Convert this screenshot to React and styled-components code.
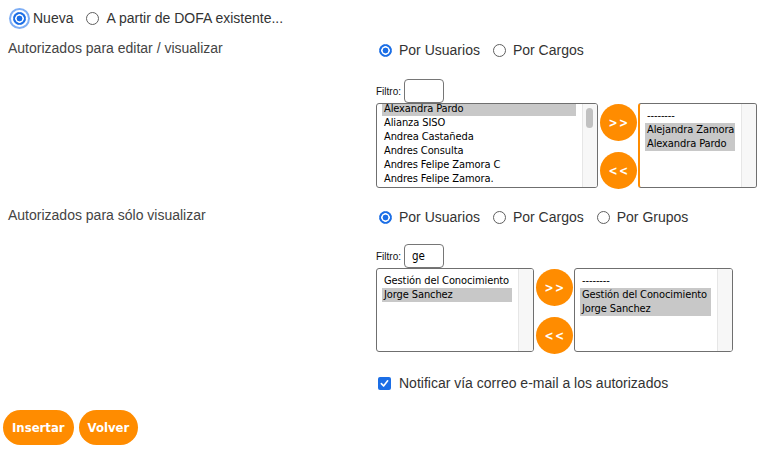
import styled, { createGlobalStyle } from 'styled-components';

const GlobalStyle = createGlobalStyle`
  body {
    margin: 0;
    background: #fff;
    font-family: 'Liberation Sans', Arial, sans-serif;
  }
`;

const ORANGE = '#ff8c00';
const LIST_FONT = "'DejaVu Sans Condensed', Tahoma, 'Liberation Sans', sans-serif";

const editUsers = ['Alexandra Pardo', 'Alianza SISO', 'Andrea Castañeda', 'Andres Consulta', 'Andres Felipe Zamora C', 'Andres Felipe Zamora.'];
const viewUsers = ['Gestión del Conocimiento', 'Jorge Sanchez'];

const Radio = ({ label, checked, focused }) => (
  <RadioLabel>
    <RadioDot $checked={checked} $focused={focused} />
    {label}
  </RadioLabel>
);

const ListBox = ({ items, selected = [], width, height, scroll = 0, accent, thumb }) => (
  <Box $width={width} $height={height} $accent={accent}>
    <Options $scroll={scroll}>
      {items.map((it) => (
        <Option key={it} $selected={selected.includes(it)}>
          {it}
        </Option>
      ))}
    </Options>
    <Track>{thumb && <Thumb />}</Track>
  </Box>
);

const Mover = () => (
  <MoverColumn>
    <MoveButton>&gt;&gt;</MoveButton>
    <MoveButton>&lt;&lt;</MoveButton>
  </MoverColumn>
);

const App = () => {
  return (
    <Page>
      <GlobalStyle />
      <TopRow>
        <Radio label="Nueva" checked focused />
        <Radio label="A partir de DOFA existente..." />
      </TopRow>

      <Section>
        <SectionLabel>Autorizados para editar / visualizar</SectionLabel>
        <RightColumn>
          <RadioRow>
            <Radio label="Por Usuarios" checked />
            <Radio label="Por Cargos" />
          </RadioRow>
          <FilterRow>
            <FilterLabel>Filtro:</FilterLabel>
            <FilterInput defaultValue="" />
          </FilterRow>
          <PickerRow>
            <ListBox items={editUsers} selected={['Alexandra Pardo']} width={222} height={85} scroll={-7} thumb />
            <Mover />
            <ListBox
              items={['--------', 'Alejandra Zamora', 'Alexandra Pardo']}
              selected={['Alejandra Zamora', 'Alexandra Pardo']}
              width={119}
              height={85}
              accent
            />
          </PickerRow>
        </RightColumn>
      </Section>

      <Section $gap={18}>
        <SectionLabel>Autorizados para sólo visualizar</SectionLabel>
        <RightColumn>
          <RadioRow>
            <Radio label="Por Usuarios" checked />
            <Radio label="Por Cargos" />
            <Radio label="Por Grupos" />
          </RadioRow>
          <FilterRow $gap={17}>
            <FilterLabel>Filtro:</FilterLabel>
            <FilterInput defaultValue="ge" />
          </FilterRow>
          <PickerRow>
            <ListBox items={viewUsers} selected={['Jorge Sanchez']} width={158} height={84} />
            <Mover />
            <ListBox
              items={['--------', 'Gestión del Conocimiento', 'Jorge Sanchez']}
              selected={['Gestión del Conocimiento', 'Jorge Sanchez']}
              width={159}
              height={84}
            />
          </PickerRow>
          <CheckRow>
            <CheckBox>
              <svg width="9" height="9" viewBox="0 0 10 10">
                <path d="M1.5 5.2 L4 7.8 L8.5 2" fill="none" stroke="#fff" strokeWidth="1.8" strokeLinecap="round" strokeLinejoin="round" />
              </svg>
            </CheckBox>
            Notificar vía correo e-mail a los autorizados
          </CheckRow>
        </RightColumn>
      </Section>

      <ActionRow>
        <ActionButton>Insertar</ActionButton>
        <ActionButton>Volver</ActionButton>
      </ActionRow>
    </Page>
  );
};

const Page = styled.div`
  padding: 8px 0 0 8px;
  width: 766px;
  box-sizing: border-box;
`;

const TopRow = styled.div`
  display: flex;
  align-items: center;
  gap: 13px;
  height: 20px;
  padding-left: 5px;
`;

const RadioLabel = styled.label`
  display: inline-flex;
  align-items: center;
  gap: 7px;
  font-size: 14px;
  color: #333;
  white-space: nowrap;
`;

const RadioDot = styled.span`
  width: 13px;
  height: 13px;
  border-radius: 50%;
  box-sizing: border-box;
  flex-shrink: 0;
  border: 1px solid ${(p) => (p.$checked ? '#1b6ee6' : '#5f5f5f')};
  background: ${(p) =>
    p.$checked ? 'radial-gradient(circle, #1b6ee6 0 2.6px, #fff 3.2px 4px, #1b6ee6 4.6px)' : '#fff'};
  box-shadow: ${(p) => (p.$focused ? '0 0 0 2px #fff, 0 0 0 4px #7eaef5' : 'none')};
`;

const Section = styled.div`
  display: grid;
  grid-template-columns: 368px 1fr;
  margin-top: ${(p) => p.$gap || 12}px;
`;

const SectionLabel = styled.div`
  font-size: 14px;
  line-height: 16px;
  color: #444;
`;

const RightColumn = styled.div`
  display: flex;
  flex-direction: column;
`;

const RadioRow = styled.div`
  display: flex;
  align-items: center;
  gap: 13px;
  height: 20px;
  padding-left: 3px;
`;

const FilterRow = styled.div`
  display: flex;
  align-items: center;
  gap: 3px;
  margin-top: ${(p) => p.$gap || 19}px;
`;

const FilterLabel = styled.span`
  font-size: 10px;
  color: #111;
`;

const FilterInput = styled.input`
  width: 40px;
  height: 24px;
  box-sizing: border-box;
  border: 1px solid #767676;
  border-radius: 4px;
  padding: 0 7px;
  font-family: ${LIST_FONT};
  font-size: 11.5px;
  color: #000;
  outline: none;
`;

const PickerRow = styled.div`
  display: flex;
  align-items: flex-start;
`;

const Box = styled.div`
  display: flex;
  width: ${(p) => p.$width}px;
  height: ${(p) => p.$height}px;
  box-sizing: border-box;
  border: 1px solid #6f6f6f;
  border-left: ${(p) => (p.$accent ? `2px solid ${ORANGE}` : '1px solid #6f6f6f')};
  border-radius: 3px;
  overflow: hidden;
  background: #fff;
`;

const Options = styled.div`
  flex: 1;
  min-width: 0;
  padding: 5px 6px 0 5px;
  margin-top: ${(p) => p.$scroll}px;
`;

const Option = styled.div`
  font-family: ${LIST_FONT};
  font-size: 11px;
  letter-spacing: -0.1px;
  line-height: 14px;
  color: #000;
  white-space: nowrap;
  overflow: hidden;
  padding-left: 2px;
  background: ${(p) => (p.$selected ? '#c8c8c8' : 'transparent')};
`;

const Track = styled.div`
  position: relative;
  width: 14px;
  flex-shrink: 0;
  background: #f7f7f7;
  border-left: 1px solid #e6e6e6;
`;

const Thumb = styled.div`
  position: absolute;
  top: 4px;
  left: 3px;
  width: 7px;
  height: 20px;
  border-radius: 4px;
  background: #c1c1c1;
`;

const MoverColumn = styled.div`
  display: flex;
  flex-direction: column;
  gap: 11px;
  padding: 1px 1px 0 2px;
`;

const MoveButton = styled.button`
  width: 37px;
  height: 37px;
  border: none;
  border-radius: 50%;
  background: ${ORANGE};
  color: #fff;
  font-family: ${LIST_FONT};
  font-weight: bold;
  font-size: 12px;
  letter-spacing: 1.5px;
  padding: 0 0 0 1px;
  cursor: pointer;
`;

const CheckRow = styled.label`
  display: flex;
  align-items: center;
  gap: 8px;
  height: 20px;
  margin-top: 19px;
  padding-left: 2px;
  font-size: 14px;
  color: #333;
`;

const CheckBox = styled.span`
  width: 13px;
  height: 13px;
  border-radius: 2px;
  background: #1b6ee6;
  display: flex;
  align-items: center;
  justify-content: center;
`;

const ActionRow = styled.div`
  display: flex;
  gap: 5px;
  margin: 17px 0 0 -5px;
`;

const ActionButton = styled.button`
  height: 35px;
  padding: 0 9px;
  border: none;
  border-radius: 18px;
  background: ${ORANGE};
  color: #fff;
  font-family: ${LIST_FONT};
  font-weight: bold;
  font-size: 13px;
  cursor: pointer;
`;

export default App;
